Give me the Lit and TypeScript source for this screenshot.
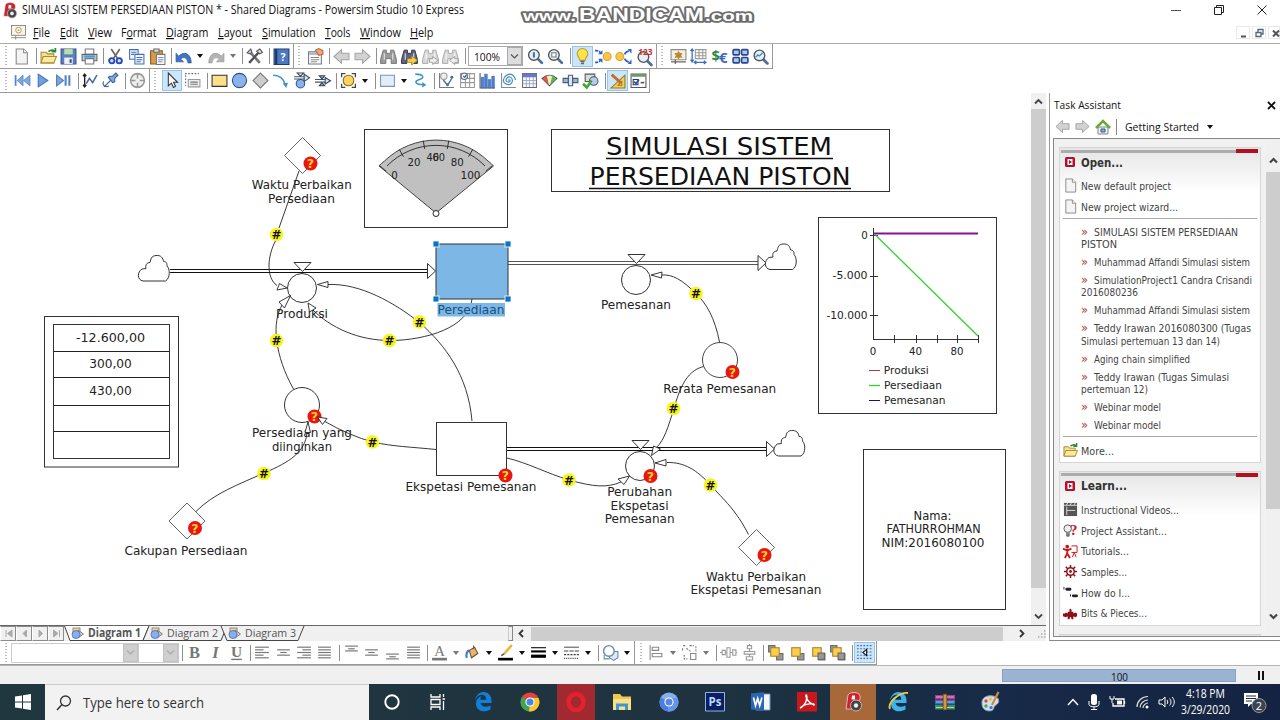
import { LitElement, html, svg, css } from "lit";
import { customElement } from "lit/decorators.js";

const SEGOE = "'Open Sans','Noto Sans',sans-serif";
const TAHOMA = "'DejaVu Sans',sans-serif";

/* A single line of text drawn to a known width. */
const fit = (text: unknown, w: number, size = 12, family = SEGOE, weight = 400, fill = "#111") => html`
  <svg width=${w} height=${Math.round(size * 1.3)} style="display:block;overflow:visible;flex:none">
    <text x="0" y=${Math.round(size * 1.02)} font-size=${size} font-family=${family} font-weight=${weight}
      fill=${fill} textLength=${w} lengthAdjust="spacingAndGlyphs">${text}</text>
  </svg>`;

const lens = (x: number, y: number) => svg`<path d="M${x + 3.5} ${y + 3.5}l4 4" stroke="#4a6ea5" stroke-width="2.6" stroke-linecap="round"/><circle cx=${x} cy=${y} r="5" fill="#e4f1fa" stroke="#555" stroke-width="1.3"/>`;
const binoc = (c: string, d: string) => svg`<path d="M3 2h3v3h4V2h3l2.5 9v3.500h-5V10h-5v4.500h-5V11z" fill=${c} stroke=${d} stroke-width=".9"/><path d="M4 5v6M12 5v6" stroke="#fff" stroke-width=".8"/>`;
const page = svg`<path d="M3 1h7l3.500 3.500V15H3z" fill="#f4f4f4" stroke="#888"/><path d="M10 1v3.500h3.500" fill="#fff" stroke="#888"/>`;
const folder = svg`<path d="M1 14V4h5l1 1.500h6V14z" fill="#f7e08c" stroke="#a98a35"/><path d="M1 14l2-6h12.500l-2.500 6z" fill="#ffe9a0" stroke="#a98a35"/><path d="M8 3.500c2-2 4-2 6-.5M14.500 0v3.500H11" fill="none" stroke="#2f8a34" stroke-width="1.600"/>`;
const lines = (a: number[][]) => a.map(([x1, x2, y]) => svg`<path d="M${x1} ${y}H${x2}" stroke="#777" stroke-width="1.100"/>`);
const layers = (back: number, mid: number) => svg`
  ${mid ? svg`<rect x="1.500" y="1.500" width="6" height="6" fill="#999" stroke="#666"/>` : ""}
  ${back ? svg`<rect x="9" y="9" width="6" height="6" fill="#999" stroke="#666"/>` : ""}
  <rect x="3.500" y="3.500" width="8" height="8" fill="#fbcf4d" stroke="#a8822a"/>
  ${back === 2 ? svg`<rect x="8.500" y="8.500" width="6" height="6" fill="#999" stroke="#666"/>` : ""}`;

const ICONS: Record<string, unknown> = {
  page,
  open: folder,
  save: svg`<path d="M1 1h14v14H1z" fill="#5b7fc0" stroke="#3a4f8c"/><path d="M4 1h8v5H4z" fill="#b6e0a8"/><path d="M4 9h8v6H4z" fill="#eef2f8"/><path d="M9 10.500h2V14H9z" fill="#3a4f8c"/>`,
  print: svg`<path d="M4 1h8v5H4z" fill="#fff" stroke="#777"/><path d="M1 6h14v6H1z" fill="#bfc5cc" stroke="#667"/><path d="M3 7h10v2H3z" fill="#3f9fd8"/><path d="M4 10h8v5H4z" fill="#fff" stroke="#777"/>`,
  cut: svg`<path d="M4 1l6 9M12 1L6 10" stroke="#666" stroke-width="1.600"/><circle cx="4.500" cy="12" r="2.500" fill="#cdd9ff" stroke="#2448b5" stroke-width="1.700"/><circle cx="11.500" cy="12" r="2.500" fill="#cdd9ff" stroke="#2448b5" stroke-width="1.700"/>`,
  copy: svg`<path d="M1.500 1.500h8v9h-8z" fill="#f3f7ff" stroke="#426cbd"/><path d="M6.500 6h8.500v9H6.500z" fill="#f3f7ff" stroke="#426cbd"/><path d="M8 9h5.500M8 11h5.500M8 13h4M3 4h5M3 6h3" stroke="#426cbd"/>`,
  paste: svg`<path d="M1.500 2.500h11V15h-11z" fill="#d99a4a" stroke="#8b5a22"/><path d="M4.500 1h5v3h-5z" fill="#ddd" stroke="#666"/><path d="M7 6h8v9.500H7z" fill="#f6f8fb" stroke="#777"/><path d="M8.500 9h5M8.500 11h5M8.500 13h4" stroke="#88a"/>`,
  undo: svg`<path d="M1 5v8h7l-2.700-2.600c3-2.600 6-1.500 7 3.600h3C15 5 8.500 2.500 3.500 7.700z" fill="#3f75c9" stroke="#2c5596" stroke-width=".7"/>`,
  redo: svg`<path d="M15 5v8H8l2.700-2.600c-3-2.600-6-1.500-7 3.600h-3C1 5 7.500 2.500 12.500 7.700z" fill="#b4b4b4" stroke="#999" stroke-width=".7"/>`,
  tools: svg`<path d="M3 3l10 11" stroke="#777" stroke-width="2.600"/><path d="M13 3L3 14" stroke="#4b4f58" stroke-width="2.200"/><path d="M1 4.500L4.500 1l1 3-1.500 1.500zM10 3l3-2 2.500 3-2.500 1.500z" fill="#ddd" stroke="#555"/>`,
  help: svg`<path d="M1 1h14v14.500H1z" fill="#4b78bf" stroke="#223a70"/><path d="M2 1h2v14H2z" fill="#1f3566"/><text x="9.500" y="12" font-size="10" font-weight="700" fill="#fff" text-anchor="middle" font-family=${SEGOE}>?</text>`,
  props: svg`<path d="M1.500 3.500h12V15h-12z" fill="#fff" stroke="#777"/><path d="M2 4h11v2.500H2z" fill="#a8b7cf"/><path d="M3.500 9h8M3.500 11h8M3.500 13h6" stroke="#888"/><path d="M8 2l3-1.500 4 2V6l-4 1z" fill="#f0a577" stroke="#b56a3c"/>`,
  left: svg`<path d="M1 8l7-6.500V5h7v6H8v3.500z" fill="#d2d2d2" stroke="#a2a2a2"/>`,
  right: svg`<path d="M15 8L8 1.500V5H1v6h7v3.500z" fill="#d2d2d2" stroke="#a2a2a2"/>`,
  bin: binoc("#9b9b9b", "#777"),
  binGo: svg`${binoc("#5d6488", "#333")}<path d="M6 10h4V7.500l5.500 4L10 16v-2.500H6z" fill="#f6cf43" stroke="#a8822a" stroke-width=".8"/>`,
  binR: svg`${binoc("#d8d8d8", "#aaa")}<path d="M7 10h3V8l5 3.500-5 4v-2H7z" fill="#eee" stroke="#999" stroke-width=".8"/>`,
  binL: svg`${binoc("#d8d8d8", "#aaa")}<path d="M15 10h-3V8l-5 3.500 5 4v-2h3z" fill="#eee" stroke="#999" stroke-width=".8"/>`,
  zoom1: svg`${lens(6.500, 6.500)}<path d="M6.500 4v5" stroke="#2f6fb5" stroke-width="1.800"/>`,
  zoomFit: svg`${lens(6.500, 6.500)}<path d="M4.500 4.500h4v4h-4z" fill="#fff" stroke="#777"/>`,
  bulb: svg`<path d="M5.500 11.500C5.500 9 3 8.500 3 5.500a5 5 0 0 1 10 0c0 3-2.500 3.500-2.500 6z" fill="#ffe34a" stroke="#c59a1d"/><path d="M6 12.500h4M6.500 14.500h3" stroke="#666" stroke-width="1.500"/>`,
  linkIn: svg`<circle cx="11.500" cy="8" r="3.700" fill="#f9c64a" stroke="#dba22b"/><path d="M0 2.500c3 0 4 0 5 2M0 13.500c3 0 4 0 5-2" fill="none" stroke="#2f61c4" stroke-width="1.600" stroke-dasharray="3 1"/><path d="M3 5.800h4V2zM3 10.200h4V14z" fill="#2f61c4"/>`,
  linkOut: svg`<circle cx="4.500" cy="8" r="3.700" fill="#f9c64a" stroke="#dba22b"/><path d="M9 6c1-2 2-3 4-3M9 10c1 2 2 3 4 3" fill="none" stroke="#2f61c4" stroke-width="1.600"/><path d="M12 1h3.500v4.500zM12 15h3.500v-4.500z" fill="#2f61c4"/>`,
  find123: svg`${lens(7, 8.500)}<text x="2" y="6.500" font-size="8" font-weight="700" fill="#d22c2c" textLength="13.500" lengthAdjust="spacingAndGlyphs" font-family=${SEGOE}>123</text>`,
  star: svg`<path d="M1 1.500h14v9.500H1z" fill="#f6f0e4" stroke="#8a8a8a"/><path d="M8 2.500l1.300 2.300 2.500-.2L10.500 7l1.300 2.300-2.500-.4L8 10.500 6.700 8.900l-2.500.4L5.500 7 4.200 4.600l2.500.2z" fill="#b8892f"/><path d="M1 13h14" stroke="#888" stroke-width="1.500"/><path d="M5 11v4" stroke="#555"/>`,
  grid: svg`<path d="M5 1.500h10v8.500H5zM8.500 1.500V10M12 1.500V10M5 4.500h10M5 7.300h10" fill="#fff" stroke="#999"/><path d="M2 1v12M.5 3L2 1l1.500 2M.5 11L2 13l1.500-2M4 13.500h11M6 12l-2 1.500L6 15M13 12l2 1.500-2 1.500" fill="none" stroke="#3a6fc1" stroke-width="1.200"/>`,
  money: svg`<text x="4.500" y="12" font-size="14" font-weight="700" fill="#2e8b45" text-anchor="middle" font-family=${SEGOE}>$</text><text x="11.500" y="14" font-size="14" font-weight="700" fill="#3f6ab5" text-anchor="middle" font-family=${SEGOE}>€</text>`,
  quad: svg`<g fill="#aec9f0" stroke="#2b468f" stroke-width="1.500"><rect x="1" y="1.500" width="6" height="5" rx="1"/><rect x="9" y="1.500" width="6" height="5" rx="1"/><rect x="1" y="9" width="6" height="5" rx="1"/><rect x="9" y="9" width="6" height="5" rx="1"/></g>`,
  zoomChart: svg`${lens(7, 7)}<path d="M3.500 8.500l2-2 1.500 1 3-3" fill="none" stroke="#2f8fd0" stroke-width="1.300"/>`,
  first: svg`<path d="M1.500 3v10" stroke="#5585c9" stroke-width="1.700"/><path d="M8.500 3v10L3 8zM15 3v10L9 8z" fill="#7ea9e0" stroke="#4c7cc0" stroke-width=".7"/>`,
  play: svg`<path d="M4 2l9 6-9 6z" fill="#6fa0e4" stroke="#3f70bb"/>`,
  step: svg`<path d="M1.500 3v10L8 8z" fill="#7ea9e0" stroke="#4c7cc0"/><path d="M10 3v10M13.500 3v10" stroke="#5585c9" stroke-width="2"/>`,
  zig: svg`<path d="M2.500 2v12M1 4l1.500-2L4 4M1 12l1.500 2L4 12" fill="none" stroke="#222" stroke-width="1.300"/><path d="M4 11L7 6l3 4 4-7" fill="none" stroke="#47649c" stroke-width="1.400"/>`,
  pin: svg`<path d="M6 5l4 5 2-1V6l3-3-2-2-3 3H7z" fill="#7fa8df" stroke="#3a5f9e"/><path d="M8 8l-6 6M1.500 9c-2 4 3 6 5 4" stroke="#3a5f9e" fill="none"/>`,
  target: svg`<circle cx="8" cy="8" r="6.500" fill="#eee" stroke="#999" stroke-width="1.500"/><path d="M8 1v5M8 10v5M1 8h5M10 8h5" stroke="#999" stroke-width="1.400"/>`,
  cursor: svg`<path d="M5 1v12l3-2.500 1.800 4 2-1L10 9.700h3.700z" fill="#fff" stroke="#333"/>`,
  lasso: svg`<path d="M1 1.500h13M1.500 3v10" stroke="#666" stroke-dasharray="1.500 1.500"/><path d="M4 7h11v7H4z" fill="#eee" stroke="#999"/><path d="M6 9.500h7M6 11.500h7" stroke="#777"/>`,
  rect: svg`<path d="M1 3h14v10.500H1z" fill="#ffe08a" stroke="#333"/>`,
  circle: svg`<circle cx="8" cy="8" r="6.700" fill="#8cb2ec" stroke="#2a4f94"/>`,
  diamond: svg`<path d="M8 1l7 7-7 7-7-7z" fill="#ccc" stroke="#777"/>`,
  arc: svg`<path d="M1 3c6 0 10 3 11.500 9" fill="none" stroke="#3f94c7" stroke-width="1.500"/><path d="M10 10.500l5-.5-1.500 5z" fill="#3f94c7"/>`,
  flowA: svg`<path d="M1 4.500h10M1 6.500h10" stroke="#456"/><path d="M10.500 2l5 3.500-5 3.500z" fill="#d7e6f7" stroke="#345"/><path d="M4 1h6L7 4z" fill="#fff" stroke="#345"/><circle cx="7" cy="11" r="4" fill="#8cb2ec" stroke="#2a4f94"/>`,
  flowB: svg`<path d="M1 7h10M1 9.500h10" stroke="#456"/><path d="M10.500 5.200l5 3-5 3.100z" fill="#d7e6f7" stroke="#345"/><path d="M5 3.500h5L7.500 6.500zM5 13h5l-2.500-3z" fill="#8cb2ec" stroke="#345"/>`,
  sun: svg`<circle cx="8" cy="8" r="5" fill="#ffd45e" stroke="#8b6a1b"/><path d="M1.500 5V1.500H5M11 1.500h3.500V5M14.500 11v3.500H11M5 14.500H1.500V11" fill="none" stroke="#444" stroke-width="1.200"/>`,
  frame: svg`<path d="M1.500 3h13v10.500h-13z" fill="#e3eefa" stroke="#7f95b5"/>`,
  curve: svg`<path d="M4 2c8 0 9 3.500 4 5s-5 5 4 5" fill="none" stroke="#3f94c7" stroke-width="1.500"/><path d="M10.500 9.500l4 2.700-4 2.500z" fill="#3f94c7"/>`,
  chartA: svg`<path d="M1.500 1v13.500H15" fill="none" stroke="#777"/><circle cx="5.500" cy="4" r="3" fill="#eee" stroke="#999"/><path d="M5 7.500l4 5 4-6.500" fill="none" stroke="#4a6cb0" stroke-width="1.300"/><circle cx="13" cy="5" r="1.400" fill="#4a6cb0"/><circle cx="9" cy="12" r="1.400" fill="#4a6cb0"/>`,
  chartB: svg`<path d="M1.500 1.500h13v13h-13zM6 1.500v13M10 1.500v13M1.500 6h13M1.500 10h13" fill="#fff" stroke="#9a9a9a"/><circle cx="5" cy="4" r="3" fill="#eee" stroke="#667"/><path d="M4 4l1.500 1L7 2.500" stroke="#224a9a" fill="none"/>`,
  bars: svg`<path d="M1 1v14h14" stroke="#555" fill="none"/><path d="M2 5h2.500v10H2zM5.300 2h2.500v13H5.300zM8.600 7h2.500v8H8.600zM12 4h2.500v11H12z" fill="#4f80cf" stroke="#345ea6" stroke-width=".5"/>`,
  spiral: svg`<path d="M1 14.500h14M1.500 1v14" stroke="#888"/><path d="M8 8c0-1 1.500-1 1.500.3S7 10.300 6 8.500s1-4.300 3.500-3.800 3 5 .5 6.500-7 0-6.800-3.500S7 2 9.500 2s5 3 5 5.500" fill="none" stroke="#3f8fb5" stroke-width="1.100"/>`,
  table: svg`<path d="M1.500 1.500h13v13h-13z" fill="#fff" stroke="#667"/><path d="M1.500 1.500h13V5h-13z" fill="#6a77c2"/><path d="M5 5v9M8 5v9M11.500 5v9M2 8h12M2 11h12" stroke="#a3a9c9"/>`,
  gauge: svg`<path d="M1 6q7-6 14 0L8 13z" fill="#fff" stroke="#444"/><path d="M1.500 6q2-2 4-2.500L7.500 12z" fill="#e05545"/><path d="M6 3.500q2-.5 4 0L8 12z" fill="#f4f0a8"/><path d="M10.500 3.600q2 .6 4 2.400l-6 6z" fill="#56b95b"/>`,
  slider: svg`<path d="M1 6h5v4H1zM10 6h5v4h-5z" fill="#8fbde0" stroke="#557"/><path d="M6 3h4v10H6z" fill="#d6e8f5" stroke="#557"/>`,
  check: svg`<path d="M3 2h9v7H3z" fill="#ddd" stroke="#555"/><circle cx="11" cy="8.500" r="4" fill="#b9cdea" stroke="#456"/><path d="M1 11l3.500 3.500L9 8" fill="none" stroke="#43a53c" stroke-width="2.500"/>`,
  pencil: svg`<path d="M15 3v12H2z" fill="#f7cf52" stroke="#9a7620"/><path d="M12 9v3.500H8.500z" fill="#cfe5f8" stroke="#9a7620"/><path d="M2.500 2.500L11 10" stroke="#c56b2b" stroke-width="2.600"/>`,
  checkbox: svg`<path d="M1 2h14v12.500H1z" fill="#fff" stroke="#556"/><path d="M1 2h14v2.500H1z" fill="#6d9b66"/><path d="M3 7h4.500v5H3z" fill="#fff" stroke="#335"/><path d="M4 9l1.500 2 3-4" fill="none" stroke="#2650a5" stroke-width="1.500"/><path d="M10 10h3.500" stroke="#555" stroke-width="1.500"/>`,
  bold: svg`<text x="8" y="13" font-size="15.500" font-weight="700" fill="#777" text-anchor="middle" font-family="'Liberation Serif',serif">B</text>`,
  italic: svg`<text x="8" y="13" font-size="15.500" font-weight="700" font-style="italic" fill="#777" text-anchor="middle" font-family="'Liberation Serif',serif">I</text>`,
  under: svg`<text x="8" y="12" font-size="14.500" font-weight="700" fill="#777" text-anchor="middle" font-family="'Liberation Serif',serif">U</text><path d="M3 14.500h10" stroke="#777" stroke-width="1.300"/>`,
  al: svg`${lines([[1, 14, 3], [1, 9, 5.500], [1, 14, 8], [1, 9, 10.500], [1, 14, 13]])}`,
  ac: svg`${lines([[2, 14, 5.500], [5, 11, 8], [2, 14, 10.500]])}`,
  ar: svg`${lines([[2, 15, 3], [7, 15, 5.500], [2, 15, 8], [7, 15, 10.500], [2, 15, 13]])}`,
  aj: svg`${lines([[2, 14, 3], [2, 14, 5.500], [2, 14, 8], [2, 14, 10.500], [2, 14, 13]])}`,
  vt: svg`${lines([[2, 14, 2], [5, 11, 4.500], [2, 14, 6.500]])}`,
  vb: svg`${lines([[2, 14, 9.500], [5, 11, 12], [2, 14, 14]])}`,
  fontA: svg`<text x="8" y="11.500" font-size="14" fill="#777" text-anchor="middle" font-family="'Liberation Serif',serif">A</text><path d="M1 13h14v2.500H1z" fill="#777"/>`,
  fill: svg`<path d="M5 6l5-3 3 6-6 4z" fill="#f0b45c" stroke="#555"/><path d="M5 6c-3 1-3 4-2.500 7" fill="none" stroke="#3f7fc1" stroke-width="2"/><path d="M9 5V1.500" stroke="#d33"/>`,
  line: svg`<path d="M14 1L7 9" stroke="#f0b02a" stroke-width="2.300"/><path d="M7 9l-3 2" stroke="#555" stroke-width="1.500"/><path d="M1 13h14v2.500H1z" fill="#000"/>`,
  width: svg`<path d="M1 3.500h14" stroke="#000"/><path d="M1 7h14" stroke="#000" stroke-width="2"/><path d="M1 11.500h14" stroke="#000" stroke-width="3"/>`,
  dash: svg`<path d="M1 3h14" stroke="#555"/><path d="M1 6.500h14" stroke="#444" stroke-dasharray="4 1"/><path d="M1 10h14" stroke="#444" stroke-dasharray="2 1"/><path d="M1 13.500h14" stroke="#444" stroke-dasharray="1 1"/>`,
  shapes: svg`<path d="M7 7h8v6l-4 2.500L7 13z" fill="#dce8f6" stroke="#6c86aa"/><circle cx="6.500" cy="6.500" r="5" fill="#fff" stroke="#6c86aa" stroke-width="1.300"/><path d="M2 10v4h5" fill="none" stroke="#6c86aa"/>`,
  alignL: svg`<path d="M2 1v14" stroke="#888"/><path d="M4 3h6v3H4zM4 9h9v3H4z" fill="#fff" stroke="#888"/>`,
  same: svg`<path d="M2 1.500h3M8 1.500h4M1.500 4v3M3 10v4h3" stroke="#777" stroke-dasharray="2 1" fill="none"/><path d="M9 9h5v5.500H9z" fill="#fff" stroke="#888"/><path d="M5 4l4 3M14 2v5" stroke="#888" stroke-dasharray="2 1"/>`,
  distH: svg`<path d="M0 8h16" stroke="#999"/><path d="M2 6h3v4H2zM6.500 3.500h3v9h-3zM12 5.500h3v5h-3z" fill="#fff" stroke="#999"/>`,
  distV: svg`<path d="M8 0v16" stroke="#999"/><path d="M6 1.500h4v3H6zM3 7h10v2.500H3zM5 12h6v3H5z" fill="#fff" stroke="#999"/>`,
  lay1: layers(1, 1),
  lay2: layers(1, 0),
  lay3: layers(2, 0),
  lay4: layers(2, 1),
  dots: svg`${[1, 4, 7, 10, 13].map((y) => svg`<path d="M1 ${y + .5}h14" stroke="#3f62a0" stroke-dasharray="1.500 1.500"/>`)}<path d="M10 5v6L6.500 8z" fill="#fff" stroke="#111"/>`,
};

const icon = (name: string, size = 17) => html`<svg class="ic" width=${size} height=${size} viewBox="0 0 16 16">${ICONS[name]}</svg>`;

/* "|" separator, "v" drop arrow, "V" disabled drop arrow, "*name" pressed button */
const tools = (items: string[]) => items.map((n) =>
  n === "|" ? html`<i class="sep"></i>`
  : n === "v" || n === "V" ? html`<i class="drop ${n === "V" ? "dim" : ""}"></i>`
  : n[0] === "*" ? html`<span class="cell on">${icon(n.slice(1))}</span>`
  : html`<span class="cell">${icon(n)}</span>`);

const RECENT = [
  [["SIMULASI SISTEM PERSEDIAAN", 144], ["PISTON", 36]],
  [["Muhammad Affandi Simulasi sistem", 156]],
  [["SimulationProject1 Candra Crisandi", 158], ["2016080236", 57]],
  [["Muhammad Affandi Simulasi sistem", 156]],
  [["Teddy Irawan 2016080300 (Tugas", 157], ["Simulasi pertemuan 13 dan 14)", 139]],
  [["Aging chain simplified", 96]],
  [["Teddy Irawan (Tugas Simulasi", 135], ["pertemuan 12)", 67]],
  [["Webinar model", 67]],
  [["Webinar model", 67]],
] as [string, number][][];

const LEARN = [
  ["Instructional Videos...", 98, svg`<path d="M1 1h14v14H1z" fill="#555"/><path d="M1 3.500h14M5 1l-1.500 2.500M9 1L7.500 3.500M13 1l-1.500 2.500M4 5v9M4 9h9" stroke="#ddd" stroke-width="1"/>`],
  ["Project Assistant...", 86, svg`<circle cx="5" cy="6" r="4" fill="#eee" stroke="#555"/><path d="M4 10v4h2.500v-4" fill="#999" stroke="#555"/><text x="11.500" y="13" font-size="16" font-weight="700" fill="#c3122a" text-anchor="middle" font-family="'Liberation Serif',serif">?</text>`],
  ["Tutorials...", 48, svg`<circle cx="4.500" cy="2.700" r="2" fill="#c8181e"/><path d="M4.500 5v5M4.500 10L2 15M4.500 10l3 5M0 5l4.500 2L9 5" stroke="#c8181e" stroke-width="2" fill="none"/><path d="M9 2h6v7H9M12 9l-2 5M12 9l2 5" stroke="#c8181e" fill="none"/>`],
  ["Samples...", 46, svg`<circle cx="8" cy="8" r="4" fill="#fff" stroke="#8d1016" stroke-width="1.600"/><circle cx="8" cy="8" r="1.500" fill="#8d1016"/><path d="M8 1v3M8 12v3M1 8h3M12 8h3M3 3l2 2M11 11l2 2M13 3l-2 2M5 11l-2 2" stroke="#8d1016" stroke-width="1.600"/>`],
  ["How do I...", 49, svg`<path d="M4 4.500h3.500M11 11.500h3.500" stroke="#222" stroke-width="3" stroke-linecap="round"/><path d="M.5 3.500h1M7.500 11h1" stroke="#222" stroke-width="2.500"/>`],
  ["Bits & Pieces...", 66, svg`<path d="M0 8h2l1-1 2 1V6h2c-1-4 3-4 2 0h2v2l2-1 2 1v3l-2 1-2-1v3H9c0-3-2-3-2 0H5v-3l-2 1-3-1z" fill="#8d1016"/>`],
] as [string, number, unknown][];

/* Diagram canvas */
const label = (s: string, x: number, y: number, w: number, size = 12.7, fill = "#222") =>
  svg`<text x=${x - w / 2} y=${y - 0.7} font-size=${size} textLength=${w} lengthAdjust="spacingAndGlyphs" fill=${fill}>${s}</text>`;
const hash = (x: number, y: number) => svg`<circle cx=${x} cy=${y} r="6.800" fill="#f8f51c"/><text x=${x} y=${y + 4.500} font-size="12" font-weight="700" text-anchor="middle" fill="#111">#</text>`;
const quest = (x: number, y: number) => svg`<circle cx=${x} cy=${y} r="7" fill="#ea1410"/><text x=${x} y=${y + 4.600} font-size="12.500" font-weight="700" text-anchor="middle" fill="#ffd42e">?</text>`;
const link = (d: string) => svg`<path d=${d} fill="none" stroke="#222" stroke-width=".9"/>`;
const head = (p: string) => svg`<polygon points=${p} fill="#fff" stroke="#222" stroke-width=".9"/>`;
const cloud = (x: number, y: number) => svg`<path transform="translate(${x} ${y})" d="M5 26C-1 25-1 17 4 14L8 13.500C7 10 9 7.500 12 7.500C13 4 13 1 18 .5C23 0 25 3 25.500 6.500C29 6.500 29 9 29 11C32 14 32.500 23 27.500 26Z" fill="#fff" stroke="#333"/>`;
const flow = (x1: number, x2: number, y: number, c = "#111") => svg`<path d="M${x1} ${y - 1.500}H${x2}M${x1} ${y + 1.500}H${x2}" stroke=${c}/><polygon points="${x2},${y - 7.500} ${x2},${y + 7.500} ${x2 + 8},${y}" fill="#fff" stroke="#333"/>`;
const valve = (x: number, y: number) => svg`<polygon points="${x - 8.500},${y} ${x + 8.500},${y} ${x},${y + 9}" fill="#fff" stroke="#333"/><circle cx=${x - .500} cy=${y + 25.500} r="14.500" fill="#fff" stroke="#333"/>`;
const dia = (x: number, y: number) => svg`<path d="M${x} ${y - 18}l18 18-18 18-18-18z" fill="#fff" stroke="#555" stroke-width=".9"/>`;
const box = (x: number, y: number, w: number, h: number) => svg`<rect x=${x} y=${y} width=${w} height=${h} fill="#fff" stroke="#333"/>`;
const tick = (deg: number) => {
  const a = (deg * Math.PI) / 180, s = Math.sin(a), c = Math.cos(a);
  return svg`<path d="M${436 + 65 * s} ${213 - 65 * c}L${436 + 73.500 * s} ${213 - 73.500 * c}" stroke="#333"/>`;
};

const diagram = html`
<svg class="canvas" width="1030" height="532" viewBox="0 93 1030 532" font-family="'DejaVu Sans',sans-serif">
  ${box(364.5, 129.5, 143, 98)}
  <path d="M436 213L379 166Q381 163.500 384.500 161A74.500 74.500 0 0 1 488 161Q491 163 493.500 166Z" fill="#c0c0c0" stroke="#444"/>
  <path d="M387 166A68.500 68.500 0 0 1 485 166" fill="none" stroke="#333"/>
  ${[-50, -30, -10, 10, 30, 50].map(tick)}
  <circle cx="436" cy="213.500" r="3" fill="#fff" stroke="#222"/>
  ${label("0", 394.500, 179.500, 6.500, 10)}${label("20", 414, 167, 13, 10)}${label("40", 432.700, 161.500, 12.500, 10)}${label("60", 438.700, 161.500, 12.500, 10)}${label("80", 457.300, 167, 13, 10)}${label("100", 470.500, 179.500, 20, 10)}

  ${box(551.5, 129.500, 338, 62)}
  ${label("SIMULASI SISTEM", 719, 155.500, 226, 24.500, "#111")}${label("PERSEDIAAN PISTON", 720, 185.500, 261, 24.500, "#111")}
  <path d="M606 158.500H833M589 188.500H851" stroke="#111" stroke-width="1.500"/>

  ${cloud(138, 255)}${flow(170, 427.500, 271)}${valve(302.500, 262.500)}
  ${dia(302.500, 155.500)}
  ${label("Waktu Perbaikan", 301.700, 190, 100)}${label("Persediaan", 301.500, 203.500, 67)}
  ${link("M299 171L279 228M276 240C267 256 266 278 277 285.500")}${head("287,288 277,290 279.500,283.500")}${hash(276.500, 234.500)}${quest(310.500, 163.500)}
  ${label("Produksi", 302, 318.500, 52)}
  ${link("M293.500 389C284 372 279 357 276.500 340C275 325 277 314 282 305")}${head("290.500,295.500 279,302 284.500,308")}${hash(276.500, 340.500)}

  ${link("M472 421C468 375 445 345 420 323C395 303 360 283 328 284.500")}${head("317.500,284.500 328,281.500 328,287.500")}${hash(419.500, 322)}
  ${link("M472 299C469 328 425 340 392 340.500C358 341 330 327 313 310")}${head("308,303 309.500,312 316,308")}${hash(389.500, 340.500)}

  ${flow(508, 758, 263, "#555")}${cloud(765, 243.500)}${valve(636.500, 254.500)}
  <rect x="436" y="244" width="72" height="55" fill="#7cb7e6" stroke="#333"/>
  ${[[436, 244], [508, 244], [436, 299], [508, 299]].map(([x, y]) => svg`<rect x=${x - 3} y=${y - 3} width="6" height="6" fill="#0a74c8" stroke="#fff" stroke-width=".8"/>`)}
  <rect x="437.500" y="303" width="67.500" height="13.500" fill="#7cb7e6"/>
  ${label("Persediaan", 471, 314.500, 67, 12.700, "#174f80")}
  ${label("Pemesanan", 636, 310, 70)}
  ${link("M719.500 342C715 318 706 303 696 293.500C682 280 673 274 661 275")}${head("651,275 662,272 661.500,278")}${hash(696, 293.500)}

  <circle cx="720" cy="360" r="17.500" fill="#fff" stroke="#444"/>
  ${label("Rerata Pemesanan", 719.700, 393.500, 113)}
  ${link("M703.500 366.500C685 371 679 392 674 408C668 428 664 440 657 447")}${quest(732.500, 372)}${hash(673.500, 408.500)}

  ${box(436.500, 422.500, 70, 53)}
  ${flow(507, 766.500, 449)}${cloud(773.500, 430)}${valve(640.500, 440.500)}
  ${head("651.500,455.500 653.500,446 660.500,449")}
  ${label("Ekspetasi Pemesanan", 471, 491.500, 131)}${quest(505.500, 475.500)}
  ${link("M436 449.500C412 447 392 446.500 373 442Q350 436 324 421")}
  <circle cx="302" cy="405" r="17.500" fill="#fff" stroke="#333"/>${quest(314.500, 416.500)}
  ${head("317.500,417 327,418.500 322.500,424.500")}${hash(372.500, 442)}
  ${label("Persediaan yang", 302, 438, 100)}${label("diinginkan", 302, 451.500, 60)}
  ${dia(187, 521)}${quest(195, 528)}
  ${link("M196 511.500C214 493 240 484 264 473C290 462 305 452 307 433")}${head("308,422 305,432.500 310.500,432.500")}${hash(264, 473.500)}
  ${label("Cakupan Persediaan", 186, 555.500, 123)}

  ${link("M507 458C528 463 546 473 569 480C594 487 607 488 621 482")}${head("629.500,476 618,479 624,484.500")}${hash(569, 480)}
  ${quest(650.500, 476)}
  ${label("Perubahan", 639.700, 497, 65)}${label("Ekspetasi", 639.500, 510.500, 58)}${label("Pemesanan", 639.700, 523.500, 70)}
  ${dia(756.500, 547.500)}
  ${link("M748.500 534.500C736 510 724 500 710.500 485C697 470 684 462 667 462.500")}${head("655,463 666,459.500 666,466")}${hash(710.500, 485)}${quest(764.500, 555)}
  ${label("Waktu Perbaikan", 756, 581.500, 100)}${label("Ekspetasi Pemesanan", 756, 595, 131)}

  ${box(44.500, 316.500, 134, 150.500)}${box(53.500, 324.500, 116, 134)}
  <path d="M53.500 351.500h116M53.500 377.500h116M53.500 405.500h116M53.500 431.500h116" stroke="#222"/>
  ${label("-12.600,00", 110.500, 342.500, 69)}${label("300,00", 110.500, 369, 42.500)}${label("430,00", 110.500, 395.500, 42.500)}

  ${box(818.500, 217.500, 178, 196)}
  <path d="M873.500 228V340M873 339.500H979M870 235.500h8M870 276.500h8M870 315.500h8M894.500 335v8M916.500 335v8M937.500 335v8M957.500 335v8M978.500 335v8" stroke="#333" fill="none"/>
  <path d="M875 234.500L978 336" stroke="#35cf35" stroke-width="1.300"/><path d="M874 233.500H978" stroke="#85158c" stroke-width="2"/>
  ${label("0", 864.500, 239.500, 6.500, 10)}${label("-5.000", 850, 280, 35, 10)}${label("-10.000", 847, 319.500, 41, 10)}
  ${label("0", 873, 355.500, 6.500, 10)}${label("40", 915.500, 355.500, 13, 10)}${label("80", 957, 355.500, 13, 10)}
  <path d="M869 370.500h11" stroke="#b03a3a"/><path d="M869 385.500h11" stroke="#35cf35" stroke-width="1.300"/><path d="M869 400.500h11" stroke="#15156a"/>
  ${label("Produksi", 906.300, 374.500, 45, 10)}${label("Persediaan", 913, 389.500, 58, 10)}${label("Pemesanan", 914.700, 404.500, 61.500, 10)}

  ${box(863.500, 449.500, 142, 160)}
  ${label("Nama:", 932.500, 521, 38)}${label("FATHURROHMAN", 933.500, 534, 94)}${label("NIM:2016080100", 933, 547.300, 103)}
</svg>`;

const edgeE = (c: string, y: string) => svg`<path d="M1 8.500C2 3 5.500 0 9.500 0c5 0 8 3.700 8 8.500v2.500H6.500c.5 3.500 5 5 10 2.500v4C9 21.500 1.500 18.500 2 11c.4-4 3-6 6-7-1.200 1-1.700 2.300-1.700 3.700h6c0-4-2.500-5-5-5C4.500 2.800 2.500 5 1 8.500z" fill=${c}/>${y ? svg`<path d="M1 17C-2 11 10 0 19 1" fill="none" stroke=${y} stroke-width="1.800"/>` : ""}`;
const chrome = (a: string, b: string, c: string, d: string) => svg`<circle cx="10" cy="10" r="9.500" fill=${a}/><path d="M10 10L1.800 5.300A9.500 9.500 0 0 0 9 19.500z" fill=${b}/><path d="M10 10L9 19.500A9.500 9.500 0 0 0 18.500 6H10z" fill=${c}/><circle cx="10" cy="10" r="4.600" fill="#fff"/><circle cx="10" cy="10" r="3.500" fill=${d}/>`;
const psim = svg`<path d="M3 17L5 3C6 0 16-1 17 4C18 9 14 11 10 11L9 17z" fill="#d3202b" stroke="#eee" stroke-width=".7"/><path d="M9 3.500h3v4H8.500z" fill="#fff"/><circle cx="13" cy="13.500" r="5.500" fill="#444" stroke="#bbb"/><circle cx="13" cy="13.500" r="2.200" fill="#eee"/>`;

const APPS: [string, unknown][] = [
  ["", svg`<circle cx="10" cy="10" r="6.700" fill="none" stroke="#fff" stroke-width="1.900"/>`],
  ["", svg`<path d="M3 2v3h9V2M3 7.500h9v5H3zM3 18v-3h9v3M15.500 2v3M15.500 9v9M14.500 7h2.500" fill="none" stroke="#fff" stroke-width="1.300"/>`],
  ["", edgeE("#1080db", "")],
  ["", chrome("#e2453a", "#38a852", "#f8c932", "#4a86e8")],
  ["opera", svg`<ellipse cx="10" cy="10" rx="7.500" ry="8" fill="none" stroke="#e3222f" stroke-width="4.500"/>`],
  ["", svg`<path d="M1 2h7l2 2.500h9V18H1z" fill="#f4c64f"/><path d="M1 7h18v11H1z" fill="#fbe08b"/><path d="M4 18v-6.500h12V18h-3v-3.500H7V18z" fill="#3f96d3"/>`],
  ["", chrome("#89aef0", "#4a7fe0", "#6595ea", "#5585e6")],
  ["", svg`<path d="M.5.500h19v18.500H.5z" fill="#0d1d60" stroke="#8ab5ea"/><text x="10" y="14" font-size="11.500" font-weight="700" fill="#b9dcff" text-anchor="middle" font-family=${SEGOE}>Ps</text>`],
  ["", svg`<path d="M5 2h14v16H5z" fill="#f3f7fc" stroke="#6d98cc"/><path d="M0 1.500L13 0v19L0 17.500z" fill="#2a66b3"/><path d="M2.500 5.500l2 8 2.200-7 2 7 2.200-8" fill="none" stroke="#fff" stroke-width="1.700"/>`],
  ["", svg`<path d="M0 0h20v19.500H0z" fill="#c9171e"/><path d="M3 16C8 14 11 7 9.500 3C8 2 8.500 9 17 13C19 11 8 11 3 16" fill="none" stroke="#fff" stroke-width="1.400"/>`],
  ["psim", psim],
  ["", edgeE("#3fb4ea", "#f3c93a")],
  ["", svg`<path d="M0 3h20v4.500H0z" fill="#a83c8e"/><path d="M0 8h20v4.500H0z" fill="#3e66b6"/><path d="M0 13h20v4.500H0z" fill="#36935a"/><path d="M8 2h4v16H8z" fill="#cf9a45" stroke="#59391a"/><path d="M1 5h7M12 5h7M1 10h7M12 10h7M1 15.500h7M12 15.500h7" stroke="#eee" stroke-width=".7"/>`],
  ["", svg`<path d="M1 12C0 5 7 3 12 4c7 1 7 7 3 9-3 1-1 4-4 5.500C7 20 1 18 1 12z" fill="#cfe0ee" stroke="#7f9db8"/><circle cx="5" cy="9" r="1.700" fill="#e04a3a"/><circle cx="9.500" cy="7" r="1.700" fill="#f3c331"/><circle cx="5" cy="14" r="1.700" fill="#47a54b"/><circle cx="10" cy="15.500" r="1.600" fill="#3b76d0"/><path d="M17.500 0L11 13" stroke="#d48a3c" stroke-width="2.200"/>`],
];

@customElement("app-root")
export class AppRoot extends LitElement {
  static styles = css`
    :host { display: block; width: 1280px; height: 720px; overflow: hidden; background: #fff; }
    * { box-sizing: border-box; }
    svg { display: block; flex: none; overflow: visible; }
    .app { position: relative; display: flex; flex-direction: column; width: 1280px; height: 720px; }
    .brand { position: absolute; left: 518px; top: 2px; }
    .title { display: flex; align-items: center; height: 22px; padding: 0 0 2px 2px; gap: 5px; }
    .grow { flex: 1; }
    .winbtns { display: flex; align-items: center; gap: 33px; padding-right: 13px; }
    .menu { display: flex; align-items: center; height: 22px; padding-left: 11px; border-bottom: 1px solid #aaaca5; }
    .items { display: flex; gap: 9.5px; padding-left: 7px; }
    .mdi { display: flex; gap: 2px; }
    .mdi svg { border: 1px solid #e6e9ed; }
    .tools { display: flex; height: 25px; }
    .tools.second { height: 24px; }
    .group { display: flex; align-items: center; border-right: 1px solid #999; border-bottom: 1px solid #999; padding-right: 1px; background: #fff; }
    .grip { width: 2px; height: 20px; margin: 0 4.700px 0 4.500px; flex: none;
      background: repeating-linear-gradient(#bbb 0 1px, transparent 1px 3px); }
    .second .grip { margin-right: 5.500px; }
    .cell { display: grid; place-items: center; width: 20.650px; height: 21px; flex: none; }
    .on { background: #cbe6fb; border: 1px solid #92c6ee; }
    .sep { width: 1px; height: 16px; margin: 0 1.200px 0 3.700px; background: #8f8f8f; flex: none; }
    .drop { width: 12px; flex: none; display: grid; place-items: center; }
    .fmt .drop { width: 12.400px; }
    .drop::before { content: ""; border: 3px solid transparent; border-top: 4px solid #111; border-bottom: 0; }
    .drop.dim::before { border-top-color: #777; }
    .combo { display: flex; align-items: center; justify-content: space-between; height: 20px; width: 55px; margin: 0 1.500px 0 1.500px; border: 1px solid #aaa; padding-left: 5px; }
    .combo b { display: grid; place-items: center; width: 15px; height: 100%; background: #ddd; border: 1px solid #aaa; }
    .combo.off { margin: 0; }
    .combo.off b { background: #cfcfcf; border-color: #c2c2c2; }
    .combo.font { width: 127.500px; border-color: #ccc; }
    .combo.size { width: 40px; border-color: #ccc; border-left: 0; }
    .main { display: flex; height: 548px; }
    .work { display: flex; flex-direction: column; width: 1050px; border-right: 1px solid #999; }
    .top { display: flex; height: 532px; }
    .vs { display: flex; flex-direction: column; align-items: center; width: 15px; background: #f0f0f0; margin-left: 1px; justify-content: space-between; padding: 4px 0 4px; }
    .vs i { width: 15px; height: 479px; background: #cdcdcd; margin: -21px 0 0; }
    .tabs { display: flex; height: 16px; background: #f0f0f0; border-top: 1px solid #666; width: 1046px; align-items: stretch; }
    .tabs .nav { width: 16px; border: 1px solid #8b8b8b; border-left-color: #fff; display: grid; place-items: center; height: 15px; }
    .split { width: 5px; margin-left: auto; border: 1px solid #888; border-left-color: #ccc; }
    .tabwrap { display: flex; width: 514px; }
    .hs { display: flex; align-items: center; flex: 1; background: #f0f0f0; padding-left: 4px; }
    .hs i { width: 472px; height: 14px; background: #cdcdcd; margin: 0 14px 0 5px; }
    .side { flex: 1; display: flex; flex-direction: column; padding: 3px 0 3px 3px; border-bottom: 1px solid #888; background: #fff; }
    .shead { display: flex; align-items: center; justify-content: space-between; height: 18px; padding: 0 4px 0 1px; }
    .snav { display: flex; align-items: center; gap: 5px; height: 24px; padding: 1px 0 0 2px; }
    .snav i.bar { width: 1px; height: 16px; background: #888; margin: 0 3px 0 0; }
    .sbody { display: flex; flex: 1; border: 1px solid #888; border-right: 0; background: #f1f1f1; min-height: 0; overflow: hidden; }
    .cards { display: flex; flex-direction: column; gap: 8px; padding: 8px 5px 0 5px; width: 212px; }
    .card { width: 202px; border: 1px solid #d5d5d5; background: linear-gradient(#e6e6e6, #fff 44px); padding: 1px 2px 0 1px; flex: none; }
    .card.open { height: 315.500px; }
    .card.learn { height: 155px; }
    .rule { display: flex; align-items: center; height: 4px; }
    .rule::before { content: ""; flex: 1; height: 3px; background: #acacac; }
    .rule::after { content: ""; width: 22px; height: 4px; background: #b40f20; }
    .ch { display: flex; align-items: center; gap: 6px; height: 18px; padding-left: 4px; }
    .row { display: flex; align-items: center; height: 20.700px; gap: 3px; padding-left: 2px; }
    .open .row { height: 21px; }
    .gapped { padding-top: 4px; }
    .learn .gapped { padding-top: 5px; }
    .hr { height: 1px; background: #aaa; margin: 1px 1px 0 2px; }
    .hr + .gapped { padding-top: 3px; }
    .recent { padding: 6.500px 0 0 20px; }
    .entry { margin-bottom: 5.800px; }
    .ln { display: flex; align-items: center; height: 12.200px; }
    .ln .mk { width: 12.500px; flex: none; }
    .ss { flex: 1; display: flex; flex-direction: column; align-items: center; justify-content: space-between; padding: 17px 0 15px; background: #f0f0f0; }
    .ss i { width: 14px; height: 337px; background: #cdcdcd; margin-top: -96px; }
    .status { display: flex; align-items: center; height: 19px; border-top: 1px solid #b5b5b5; background: #f0f0f0; justify-content: flex-end; padding-right: 16px; gap: 22px; }
    .prog { display: grid; place-items: center; width: 234px; height: 13px; background: #9ab3d1; border: 1px solid #87a2c4; }
    .task { display: flex; height: 36px; background: linear-gradient(90deg, #21373f, #1e333f 55%, #172a47 78%, #142342); align-items: stretch; }
    .start { width: 45px; display: grid; place-items: center; }
    .search { width: 324px; background: #f2f2f2; display: flex; align-items: center; gap: 11px; padding-left: 11px; border-top: 1px solid #ccc; }
    .apps { display: flex; width: 645px; }
    .app-ic { width: 46.150px; display: grid; place-items: center; }
    .apps .opera { background: linear-gradient(#a02a30, #a02a30) center / 38px 100% no-repeat; }
    .apps .psim { background: #a9683a; }
    .tray { flex: 1; display: flex; align-items: center; gap: 9.200px; padding-left: 53px; }
    .clock { display: flex; flex-direction: column; align-items: center; margin: 0 2px 0 -2.500px; }
    .fmt { display: flex; height: 24px; background: #fff; }
    .note { margin-left: 1px; }
  `;

  menu(text: string, i: number, w: number) {
    return fit(svg`${text.slice(0, i)}<tspan text-decoration="underline">${text[i]}</tspan>${text.slice(i + 1)}`, w, 12);
  }

  chev(d: string, c = "#444", w = 1.8) {
    return html`<svg width="9" height="9" viewBox="0 0 9 9"><path d=${d} fill="none" stroke=${c} stroke-width=${w}/></svg>`;
  }

  tab(label: string, w: number, textW: number, active: boolean, left: string) {
    return html`<svg width=${w} height="15">
      <path d="${left}H${w}L${w + 6} 0" fill=${active ? "#fff" : "#f0f0f0"} stroke="#444"/>
      <rect x="9" y="2" width="7" height="5" fill="#f4d984" stroke="#777" stroke-width=".8"/>
      <path d="M14 4l5.500 4-5.500 4z" fill="#ccc" stroke="#666" stroke-width=".8"/>
      <circle cx="12" cy="8.500" r="4" fill="#86aef0" stroke="#4b6ba8" stroke-width=".8"/>
      <text x="24" y="10.500" font-family=${SEGOE} font-size="11.500" font-weight=${active ? 700 : 400} fill="#555"
        textLength=${textW} lengthAdjust="spacingAndGlyphs">${label}</text>
    </svg>`;
  }

  render() {
    const up = "M1 6.500L4.500 3L8 6.500", down = "M1 2.500L4.500 6L8 2.500";
    const lt = "M6 1L2.500 4.500L6 8", rt = "M3 1L6.500 4.500L3 8";
    return html`<div class="app">
      <div class="title">
        <svg width="15" height="17" viewBox="1 0 18 20">${psim}</svg>
        ${fit("SIMULASI SISTEM PERSEDIAAN PISTON * - Shared Diagrams - Powersim Studio 10 Express", 442, 12)}
        <span class="grow"></span>
        <div class="winbtns">
          <svg width="10" height="10"><path d="M0 5.500h10" stroke="#555"/></svg>
          <svg width="10" height="10"><path d="M.5 2.500h7v7h-7zM2.500 2.500v-2h7v7h-2" fill="none" stroke="#222"/></svg>
          <svg width="10" height="10"><path d="M.5.500l9 9M9.500.500l-9 9" stroke="#222"/></svg>
        </div>
      </div>
      <svg class="brand" width="240" height="26" font-family="'Liberation Sans',sans-serif" font-weight="700" fill="#fff" stroke="#6d6d6d" stroke-width="3.500" stroke-linejoin="round" paint-order="stroke">
        <text x="5" y="18.500" font-size="15" textLength="53" lengthAdjust="spacingAndGlyphs">www.</text>
        <text x="61" y="18.500" font-size="19" textLength="125" lengthAdjust="spacingAndGlyphs">BANDICAM</text>
        <text x="187" y="18.500" font-size="15" textLength="48" lengthAdjust="spacingAndGlyphs">.com</text>
      </svg>
      <div class="menu">
        <svg width="15" height="15" viewBox="0 0 16 16"><rect x=".5" y=".5" width="15" height="10.500" fill="#faf6ea" stroke="#888"/><circle cx="8" cy="5.500" r="3" fill="#fff" stroke="#b8923c"/><circle cx="8" cy="5.500" r="1" fill="#b8923c"/><path d="M0 13.500h16M5 11.500v4" stroke="#888"/></svg>
        <div class="items">${this.menu("File", 0, 17)}${this.menu("Edit", 0, 18.5)}${this.menu("View", 0, 24)}${this.menu("Format", 1, 35.500)}${this.menu("Diagram", 0, 42.500)}${this.menu("Layout", 0, 34)}${this.menu("Simulation", 0, 53.500)}${this.menu("Tools", 0, 25.500)}${this.menu("Window", 0, 41)}${this.menu("Help", 0, 23.500)}</div>
        <span class="grow"></span>
        <div class="mdi">
          <svg width="14" height="13"><path d="M4 9.500h5" stroke="#555" stroke-width="2"/></svg>
          <svg width="14" height="13"><path d="M3 5.500h5v4H3zM5 5V2.500h5V7H8" fill="none" stroke="#567" stroke-width="1.300"/></svg>
          <svg width="12" height="13"><path d="M4 3.500l6 6M10 3.500l-6 6" stroke="#555" stroke-width="2"/></svg>
        </div>
      </div>

      <div class="tools">
        <div class="group"><i class="grip"></i>${tools(["page", "|", "open", "save", "print", "|", "cut", "copy", "paste", "|", "undo", "v", "redo", "V", "|", "tools", "|", "help"])}</div>
        <div class="group"><i class="grip"></i>${tools(["props", "|", "left", "right", "|", "bin", "binGo", "binR", "binL", "|"])}
          <span class="combo">${fit("100%", 26, 11.5)}<b>${this.chev(down, "#555", 1.2)}</b></span>
          ${tools(["zoom1", "zoomFit", "|", "*bulb", "linkIn", "linkOut", "find123"])}</div>
        <div class="group"><i class="grip"></i>${tools(["star", "grid", "money", "quad", "zoomChart"])}</div>
      </div>
      <div class="tools second">
        <div class="group"><i class="grip"></i>${tools(["first", "play", "step", "|", "zig", "pin", "|", "target"])}</div>
        <div class="group"><i class="grip"></i>${tools(["*cursor", "lasso", "|", "rect", "circle", "diamond", "arc", "flowA", "flowB", "|", "sun", "v", "|", "frame", "v", "curve", "|", "chartA", "chartB", "bars", "spiral", "table", "gauge", "slider", "check", "|", "*pencil", "checkbox"])}</div>
      </div>

      <div class="main">
        <div class="work">
          <div class="top">
            ${diagram}
            <div class="vs">${this.chev(up)}<i></i>${this.chev(down)}</div>
          </div>
          <div class="tabs">
            <div class="tabwrap">
              ${["M2 1v7M8 1v7L3.500 4.500z", "M6.500 1v7L3 4.500z", "M3 1v7l3.500-3.500z", "M7.500 1v7M1.500 1v7L6 4.500z"].map((d) => html`<span class="nav"><svg width="9" height="9"><path d=${d} fill="#aaa" stroke="#aaa"/></svg></span>`)}
              ${this.tab("Diagram 1", 79, 53, true, "M.5 0L6 14.500")}${this.tab("Diagram 2", 78, 51, false, "M6 0L0 14.500")}${this.tab("Diagram 3", 77, 51, false, "M0 0L6 14.500")}
              <span class="split"></span>
            </div>
            <div class="hs">${this.chev(lt, "#333")}<i></i>${this.chev(rt, "#333")}
              <svg width="20" height="12"><path d="M18 3h2M15 6h5M12 9h8" stroke="#aaa" stroke-width="1.500" stroke-dasharray="1.500 1.500"/></svg>
            </div>
          </div>
        </div>
        <div class="side">
          <div class="shead">${fit("Task Assistant", 67, 11)}<svg width="9" height="9"><path d="M1 1l7 7M8 1L1 8" stroke="#111" stroke-width="1.800"/></svg></div>
          <div class="snav">${icon("left", 15)}${icon("right", 15)}
            <svg width="16" height="16" viewBox="0 0 16 16"><path d="M3 8h10v7H3z" fill="#e8f0f5" stroke="#888"/><path d="M1 9l7-7 7 7" fill="none" stroke="#67ab3f" stroke-width="2.500"/><path d="M6 10h4v3H6z" fill="#7fb7ea" stroke="#457"/></svg>
            <i class="bar"></i>${fit("Getting Started", 74, 11.5)}<i class="drop"></i></div>
          <div class="sbody">
            <div class="cards">
              <div class="card open">
                <div class="rule"></div>
                <div class="ch"><svg width="10" height="10"><rect width="10" height="10" rx="1.500" fill="#b40f2c"/><path d="M2.500 2h5v6h-5z" fill="#fff"/><path d="M4 3l3 2-3 2z" fill="#b40f2c"/></svg>${fit("Open...", 42, 11.5, TAHOMA, 700, "#333")}</div>
                <div class="gapped">
                  <div class="row">${icon("page", 15)}${fit("New default project", 90, 10.5, TAHOMA, 400, "#444")}</div>
                  <div class="row">${icon("page", 15)}${fit("New project wizard...", 97, 10.5, TAHOMA, 400, "#444")}</div>
                </div>
                <div class="hr"></div>
                <div class="recent">${RECENT.map((e) => html`<div class="entry">${e.map(([t, w], i) => html`<div class="ln">${i ? "" : html`<span class="mk">${fit("»", 7, 11.5, TAHOMA, 400, "#b0402a")}</span>`}${fit(t, w, 10.3, TAHOMA, 400, "#444")}</div>`)}</div>`)}</div>
                <div class="hr"></div>
                <div class="gapped"><div class="row">${icon("open", 15)}${fit("More...", 33, 10.5, TAHOMA, 400, "#444")}</div></div>
              </div>
              <div class="card learn">
                <div class="rule"></div>
                <div class="ch"><svg width="10" height="10"><rect width="10" height="10" rx="1.500" fill="#b40f2c"/><path d="M2.500 2h5v6h-5z" fill="#fff"/><path d="M4 3l3 2-3 2z" fill="#b40f2c"/></svg>${fit("Learn...", 46, 11.5, TAHOMA, 700, "#333")}</div>
                <div class="gapped">${LEARN.map(([t, w, g]) => html`<div class="row"><svg width="15" height="15" viewBox="0 0 16 16">${g}</svg>${fit(t, w, 10.5, TAHOMA, 400, "#444")}</div>`)}</div>
              </div>
              <div class="card learn"><div class="rule"></div></div>
            </div>
            <div class="ss">${this.chev(up, "#444", 2.2)}<i></i>${this.chev(down, "#444", 2.2)}</div>
          </div>
        </div>
      </div>

      <div class="fmt">
        <div class="group"><i class="grip"></i>
          <span class="combo font off"><span></span><b>${this.chev(down, "#aaa", 1.2)}</b></span>
          <span class="combo size off"><span></span><b>${this.chev(down, "#aaa", 1.2)}</b></span>
          ${tools(["|", "bold", "italic", "under", "|", "al", "ac", "ar", "aj", "|", "vt", "ac", "vb", "aj", "|", "fontA", "V", "fill", "v", "line", "v", "width", "v", "dash", "v", "|", "shapes", "v"])}</div>
        <div class="group"><i class="grip"></i>${tools(["alignL", "V", "same", "V", "|", "distH", "distV", "|", "lay1", "lay2", "lay3", "lay4", "|", "*dots"])}</div>
      </div>
      <div class="status">
        <div class="prog">${fit("100", 17, 11)}</div>
        <svg width="6" height="9"><path d="M1 0v9M5 0v9" stroke="#111" stroke-width="2"/></svg>
      </div>

      <div class="task">
        <div class="start"><svg width="16" height="16"><path d="M0 2.500l7-1V7.500H0zM8 1.300L16 0v7.500H8zM0 8.500h7v6l-7-1zM8 8.500h8V16l-8-1.300z" fill="#fff"/></svg></div>
        <div class="search"><svg width="16" height="16"><circle cx="9.500" cy="6" r="5" fill="none" stroke="#333" stroke-width="1.300"/><path d="M6 9.500L1 15" stroke="#333" stroke-width="1.500"/></svg>${fit("Type here to search", 121, 14, SEGOE, 400, "#333")}</div>
        <div class="apps">${APPS.map(([c, g]) => html`<span class="app-ic ${c}"><svg width="20" height="20" viewBox="0 0 20 20">${g}</svg></span>`)}</div>
        <div class="tray">
          <svg width="12" height="10"><path d="M1 8l5-5.500L11 8" fill="none" stroke="#fff" stroke-width="1.400"/></svg>
          <svg width="12" height="16"><rect x="3" y="0" width="6" height="11" rx="2.500" fill="#fff"/><path d="M1 7v3.500c0 3 10 3 10 0V7M6 13v3M3 15.500h6" fill="none" stroke="#fff"/></svg>
          <svg width="17" height="14"><path d="M6 4h9v7H4V8M15.500 6v3" fill="none" stroke="#fff" stroke-width="1.300"/><path d="M8 5.500h5v4H8z" fill="#fff"/><path d="M1 1v3h4V1M3 4v4" fill="none" stroke="#fff"/></svg>
          <svg width="13" height="14"><path d="M1 12C1 6 6 1.500 12 1.500M4 12.500c0-4 4-7.500 8-7.500M7 13c0-2.500 2.500-5 5-5" fill="none" stroke="#ddd" stroke-width="1.200"/><circle cx="11" cy="12" r="1.500" fill="#fff"/></svg>
          <svg width="17" height="14"><path d="M1 5h3l3-3v10L4 9H1z" fill="none" stroke="#fff"/><path d="M9 5c1 1 1 3 0 4M11.500 3.500c2 2 2 5 0 7M14 2c3 3 3 7 0 10" fill="none" stroke="#fff"/></svg>
          <div class="clock">${fit("4:18 PM", 39, 12, SEGOE, 400, "#fff")}${fit("3/29/2020", 49, 12, SEGOE, 400, "#fff")}</div>
          <svg class="note" width="26" height="22"><path d="M1 2h14v11H8l-3 3v-3H1z" fill="#fff"/><path d="M3 5h10M3 7.500h10M3 10h6" stroke="#1a2a48"/><circle cx="16" cy="14.500" r="7" fill="#3b4350" stroke="#999"/><text x="16" y="18.500" font-size="11" fill="#fff" text-anchor="middle" font-family=${SEGOE}>2</text></svg>
        </div>
      </div>
    </div>`;
  }
}
